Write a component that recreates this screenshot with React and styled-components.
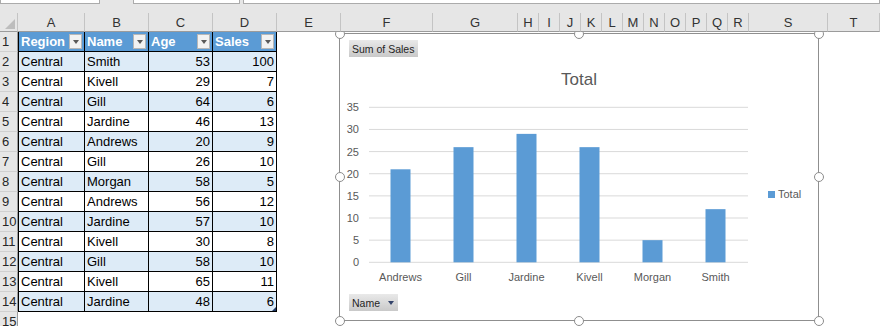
import React from 'react';
import styled, { createGlobalStyle } from 'styled-components';

const GlobalStyle = createGlobalStyle`
  html, body {
    margin: 0;
    padding: 0;
    background: #fff;
    overflow: hidden;
  }
  body {
    font-family: "Liberation Sans", Arial, sans-serif;
  }
`;

const Page = styled.div`
  position: relative;
  width: 880px;
  height: 326px;
  overflow: hidden;
  background: #fff;
`;

const TopStrip = styled.div`
  position: relative;
  z-index: 2;
  display: flex;
  height: 13px;
  background: #e6e6e6;
`;

const BarBox = styled.div`
  box-sizing: border-box;
  height: 4px;
  margin-left: ${({ $gap }) => $gap || 0}px;
  width: ${({ $w }) => ($w ? `${$w}px` : 'auto')};
  flex: ${({ $w }) => ($w ? 'none' : '1')};
  background: #fff;
  border: 1px solid #ababab;
  border-top: none;
`;

const Sheet = styled.div`
  display: grid;
  grid-template-columns: 18px 67px 64px 64px 64px 64px 92px 85px repeat(11, 21px) 79px 1fr;
  grid-template-rows: 19px;
  grid-auto-rows: 20px;
`;

const Corner = styled.div`
  position: relative;
  z-index: 2;
  background: #e6e6e6;
  border-right: 1px solid #c4c4c4;
  border-bottom: 1px solid #9b9b9b;
  box-sizing: border-box;

  &::after {
    content: '';
    position: absolute;
    right: 2px;
    bottom: 2px;
    border-style: solid;
    border-width: 0 0 10px 10px;
    border-color: transparent transparent #bdbdbd transparent;
  }
`;

const ColHead = styled.div`
  position: relative;
  z-index: 2;
  box-sizing: border-box;
  display: flex;
  align-items: center;
  justify-content: center;
  background: #e6e6e6;
  border-right: 1px solid #c4c4c4;
  border-bottom: 1px solid #9b9b9b;
  color: #333;
  font-size: 13px;
`;

const RowHead = styled.div`
  box-sizing: border-box;
  display: flex;
  align-items: center;
  padding-left: 2px;
  background: #e6e6e6;
  border-right: 1px solid #9b9b9b;
  border-bottom: 1px solid #d0d0d0;
  color: #262626;
  font-size: 13px;
`;

const Cell = styled.div`
  position: relative;
  box-sizing: border-box;
  display: flex;
  align-items: center;
  justify-content: ${({ $num }) => ($num ? 'flex-end' : 'flex-start')};
  padding: 0 2px;
  border-right: 1px solid #000;
  border-bottom: 1px solid #000;
  border-left: ${({ $first }) => ($first ? '1px solid #000' : 'none')};
  background: ${({ $band }) => ($band ? '#ddebf7' : '#fff')};
  color: #000;
  font-size: 13px;
  white-space: nowrap;

  ${({ $corner }) =>
    $corner &&
    `&::after {
      content: '';
      position: absolute;
      right: 0;
      bottom: 0;
      border-style: solid;
      border-width: 0 0 4px 4px;
      border-color: transparent transparent #1f3864 transparent;
    }`}
`;

const HeadCell = styled(Cell)`
  justify-content: space-between;
  padding-right: 2px;
  background: #5b9bd5;
  color: #fff;
  font-weight: bold;
`;

const FilterButton = styled.span`
  box-sizing: border-box;
  display: flex;
  align-items: center;
  justify-content: center;
  width: 13px;
  height: 15px;
  background: #f2f2f2;
  border: 1px solid #b7b7b7;

  &::after {
    content: '';
    border-style: solid;
    border-width: 4px 3.5px 0 3.5px;
    border-color: #595959 transparent transparent transparent;
  }
`;

const Filler = styled.div`
  grid-column: 6 / -1;
  background: #fff;
`;

const ChartBox = styled.div`
  position: absolute;
  z-index: 1;
  left: 339px;
  top: 33px;
  width: 480px;
  height: 288px;
  box-sizing: border-box;
  border: 1px solid #8f8f8f;
  background: #fff;
  display: flex;
  flex-direction: column;
`;

const FieldButton = styled.div`
  align-self: flex-start;
  display: flex;
  align-items: center;
  gap: 8px;
  height: 17px;
  margin: ${({ $top }) => $top}px 0 0 9px;
  padding: 0 4px 0 3px;
  background: linear-gradient(to bottom, #e9e9e9, #c9c9c9);
  color: #1f1f1f;
  font-size: 10.5px;
  white-space: nowrap;
`;

const DropArrow = styled.span`
  border-style: solid;
  border-width: 4px 3.5px 0 3.5px;
  border-color: #34446b transparent transparent transparent;
`;

const ChartTitle = styled.div`
  margin-top: 12px;
  height: 22px;
  line-height: 22px;
  text-align: center;
  color: #595959;
  font-size: 17px;
`;

const Plot = styled.svg`
  display: block;
  width: 478px;
  height: 200px;
  font-family: "Liberation Sans", Arial, sans-serif;
`;

const Handle = styled.span`
  position: absolute;
  left: ${({ $x }) => $x}%;
  top: ${({ $y }) => $y}%;
  width: 10px;
  height: 10px;
  box-sizing: border-box;
  border-radius: 50%;
  border: 1.5px solid #8c8c8c;
  background: #fff;
  transform: translate(-50%, -50%);
  margin-left: ${({ $x }) => ($x === 0 ? -0.5 : $x === 100 ? 0.5 : 0)}px;
  margin-top: ${({ $y }) => ($y === 0 ? -0.5 : $y === 100 ? 0.5 : 0)}px;
`;

const columns = ['A', 'B', 'C', 'D', 'E', 'F', 'G', 'H', 'I', 'J', 'K', 'L', 'M', 'N', 'O', 'P', 'Q', 'R', 'S', 'T'];

const rows = [
  ['Central', 'Smith', 53, 100],
  ['Central', 'Kivell', 29, 7],
  ['Central', 'Gill', 64, 6],
  ['Central', 'Jardine', 46, 13],
  ['Central', 'Andrews', 20, 9],
  ['Central', 'Gill', 26, 10],
  ['Central', 'Morgan', 58, 5],
  ['Central', 'Andrews', 56, 12],
  ['Central', 'Jardine', 57, 10],
  ['Central', 'Kivell', 30, 8],
  ['Central', 'Gill', 58, 10],
  ['Central', 'Kivell', 65, 11],
  ['Central', 'Jardine', 48, 6],
];

const totals = [
  ['Andrews', 21],
  ['Gill', 26],
  ['Jardine', 29],
  ['Kivell', 26],
  ['Morgan', 5],
  ['Smith', 12],
];

const handles = [
  [0, 0], [50, 0], [100, 0],
  [0, 50], [100, 50],
  [0, 100], [50, 100], [100, 100],
];

const ZERO_Y = 171.3;
const UNIT = 4.4286;

function SalesChart() {
  const ticks = [0, 5, 10, 15, 20, 25, 30, 35];
  return (
    <Plot viewBox="0 0 478 200">
      {ticks.map((t) => {
        const y = ZERO_Y - t * UNIT;
        return (
          <g key={t}>
            <line x1="29" x2="408" y1={y} y2={y} stroke="#d9d9d9" strokeWidth="1" />
            <text x="19" y={y + 4} textAnchor="end" fontSize="11" fill="#595959">
              {t}
            </text>
          </g>
        );
      })}
      {totals.map(([name, v], i) => {
        const cx = 60.5 + 63 * i;
        const h = v * UNIT;
        return (
          <g key={name}>
            <rect x={cx - 10} y={ZERO_Y - h} width="20" height={h} fill="#5b9bd5" />
            <text x={cx} y="190" textAnchor="middle" fontSize="11" fill="#595959">
              {name}
            </text>
          </g>
        );
      })}
      <rect x="428" y="100" width="7" height="7" fill="#5b9bd5" />
      <text x="438" y="107" fontSize="11" fill="#595959">Total</text>
    </Plot>
  );
}

export default function App() {
  return (
    <Page>
      <GlobalStyle />
      <TopStrip>
        <BarBox $w={100} />
        <BarBox $w={107} $gap={33} />
        <BarBox $gap={3} />
      </TopStrip>
      <Sheet>
        <Corner />
        {columns.map((c) => (
          <ColHead key={c}>{c}</ColHead>
        ))}

        <RowHead>1</RowHead>
        {['Region', 'Name', 'Age', 'Sales'].map((h, i) => (
          <HeadCell key={h} $first={i === 0}>
            {h}
            <FilterButton />
          </HeadCell>
        ))}
        <Filler />

        {rows.map((r, idx) => {
          const band = idx % 2 === 0;
          const last = idx === rows.length - 1;
          return (
            <React.Fragment key={idx}>
              <RowHead>{idx + 2}</RowHead>
              <Cell $first $band={band}>{r[0]}</Cell>
              <Cell $band={band}>{r[1]}</Cell>
              <Cell $num $band={band}>{r[2]}</Cell>
              <Cell $num $band={band} $corner={last}>{r[3]}</Cell>
              <Filler />
            </React.Fragment>
          );
        })}

        <RowHead>15</RowHead>
        <Filler style={{ gridColumn: '2 / -1' }} />
      </Sheet>

      <ChartBox>
        <FieldButton $top={6}>Sum of Sales</FieldButton>
        <ChartTitle>Total</ChartTitle>
        <SalesChart />
        <FieldButton $top={3}>
          Name
          <DropArrow />
        </FieldButton>
        {handles.map(([x, y]) => (
          <Handle key={`${x}-${y}`} $x={x} $y={y} />
        ))}
      </ChartBox>
    </Page>
  );
}
